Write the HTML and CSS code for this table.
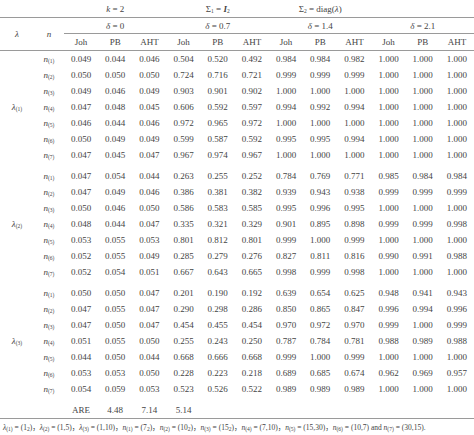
FILE: index.html
```html
<!DOCTYPE html>
<html>
<head>
<meta charset="utf-8">
<link rel="stylesheet" href="styles.css">
</head>
<body>
<table class="tbl">
<colgroup><col class="c-l"><col class="c-n"><col span="12" class="c-d"></colgroup>
<thead>
<tr class="r1">
<th></th><th></th>
<th colspan="3"><i>k</i> = 2</th>
<th colspan="3">Σ<sub class="s">1</sub> = <b><i>I</i></b><sub class="s">2</sub></th>
<th colspan="3">Σ<sub class="s">2</sub> = diag(<i>λ</i>)</th>
<th colspan="3"></th>
</tr>
<tr class="r2">
<th rowspan="2" class="lab"><i>λ</i></th><th rowspan="2" class="lab"><i>n</i></th>
<th colspan="3" class="dl"><i>δ</i> = 0</th>
<th colspan="3" class="dl"><i>δ</i> = 0.7</th>
<th colspan="3" class="dl"><i>δ</i> = 1.4</th>
<th colspan="3" class="dl"><i>δ</i> = 2.1</th>
</tr>
<tr class="r3">
<th>Joh</th><th>PB</th><th>AHT</th><th>Joh</th><th>PB</th><th>AHT</th><th>Joh</th><th>PB</th><th>AHT</th><th>Joh</th><th>PB</th><th>AHT</th>
</tr>
</thead>
<tbody>
<tr class="first"><td rowspan="7" class="lam"><i>λ</i><sub class="s">(1)</sub></td><td><i>n</i><sub class="s">(1)</sub></td><td>0.049</td><td>0.044</td><td>0.046</td><td>0.504</td><td>0.520</td><td>0.492</td><td>0.984</td><td>0.984</td><td>0.982</td><td>1.000</td><td>1.000</td><td>1.000</td></tr>
<tr><td><i>n</i><sub class="s">(2)</sub></td><td>0.050</td><td>0.050</td><td>0.050</td><td>0.724</td><td>0.716</td><td>0.721</td><td>0.999</td><td>0.999</td><td>0.999</td><td>1.000</td><td>1.000</td><td>1.000</td></tr>
<tr><td><i>n</i><sub class="s">(3)</sub></td><td>0.049</td><td>0.046</td><td>0.049</td><td>0.903</td><td>0.901</td><td>0.902</td><td>1.000</td><td>1.000</td><td>1.000</td><td>1.000</td><td>1.000</td><td>1.000</td></tr>
<tr><td><i>n</i><sub class="s">(4)</sub></td><td>0.047</td><td>0.048</td><td>0.045</td><td>0.606</td><td>0.592</td><td>0.597</td><td>0.994</td><td>0.992</td><td>0.994</td><td>1.000</td><td>1.000</td><td>1.000</td></tr>
<tr><td><i>n</i><sub class="s">(5)</sub></td><td>0.046</td><td>0.044</td><td>0.046</td><td>0.972</td><td>0.965</td><td>0.972</td><td>1.000</td><td>1.000</td><td>1.000</td><td>1.000</td><td>1.000</td><td>1.000</td></tr>
<tr><td><i>n</i><sub class="s">(6)</sub></td><td>0.050</td><td>0.049</td><td>0.049</td><td>0.599</td><td>0.587</td><td>0.592</td><td>0.995</td><td>0.995</td><td>0.994</td><td>1.000</td><td>1.000</td><td>1.000</td></tr>
<tr><td><i>n</i><sub class="s">(7)</sub></td><td>0.047</td><td>0.045</td><td>0.047</td><td>0.967</td><td>0.974</td><td>0.967</td><td>1.000</td><td>1.000</td><td>1.000</td><td>1.000</td><td>1.000</td><td>1.000</td></tr>

<tr class="gap"><td rowspan="7" class="lam"><i>λ</i><sub class="s">(2)</sub></td><td><i>n</i><sub class="s">(1)</sub></td><td>0.047</td><td>0.054</td><td>0.044</td><td>0.263</td><td>0.255</td><td>0.252</td><td>0.784</td><td>0.769</td><td>0.771</td><td>0.985</td><td>0.984</td><td>0.984</td></tr>
<tr><td><i>n</i><sub class="s">(2)</sub></td><td>0.047</td><td>0.049</td><td>0.046</td><td>0.386</td><td>0.381</td><td>0.382</td><td>0.939</td><td>0.943</td><td>0.938</td><td>0.999</td><td>0.999</td><td>0.999</td></tr>
<tr><td><i>n</i><sub class="s">(3)</sub></td><td>0.050</td><td>0.046</td><td>0.050</td><td>0.586</td><td>0.583</td><td>0.585</td><td>0.995</td><td>0.996</td><td>0.995</td><td>1.000</td><td>1.000</td><td>1.000</td></tr>
<tr><td><i>n</i><sub class="s">(4)</sub></td><td>0.048</td><td>0.044</td><td>0.047</td><td>0.335</td><td>0.321</td><td>0.329</td><td>0.901</td><td>0.895</td><td>0.898</td><td>0.999</td><td>0.999</td><td>0.998</td></tr>
<tr><td><i>n</i><sub class="s">(5)</sub></td><td>0.053</td><td>0.055</td><td>0.053</td><td>0.801</td><td>0.812</td><td>0.801</td><td>0.999</td><td>1.000</td><td>0.999</td><td>1.000</td><td>1.000</td><td>1.000</td></tr>
<tr><td><i>n</i><sub class="s">(6)</sub></td><td>0.052</td><td>0.055</td><td>0.049</td><td>0.285</td><td>0.279</td><td>0.276</td><td>0.827</td><td>0.811</td><td>0.816</td><td>0.990</td><td>0.991</td><td>0.988</td></tr>
<tr><td><i>n</i><sub class="s">(7)</sub></td><td>0.052</td><td>0.054</td><td>0.051</td><td>0.667</td><td>0.643</td><td>0.665</td><td>0.998</td><td>0.999</td><td>0.998</td><td>1.000</td><td>1.000</td><td>1.000</td></tr>

<tr class="gap"><td rowspan="7" class="lam"><i>λ</i><sub class="s">(3)</sub></td><td><i>n</i><sub class="s">(1)</sub></td><td>0.050</td><td>0.050</td><td>0.047</td><td>0.201</td><td>0.190</td><td>0.192</td><td>0.639</td><td>0.654</td><td>0.625</td><td>0.948</td><td>0.941</td><td>0.943</td></tr>
<tr><td><i>n</i><sub class="s">(2)</sub></td><td>0.047</td><td>0.055</td><td>0.047</td><td>0.290</td><td>0.298</td><td>0.286</td><td>0.850</td><td>0.865</td><td>0.847</td><td>0.996</td><td>0.994</td><td>0.996</td></tr>
<tr><td><i>n</i><sub class="s">(3)</sub></td><td>0.047</td><td>0.050</td><td>0.047</td><td>0.454</td><td>0.455</td><td>0.454</td><td>0.970</td><td>0.972</td><td>0.970</td><td>0.999</td><td>1.000</td><td>0.999</td></tr>
<tr><td><i>n</i><sub class="s">(4)</sub></td><td>0.051</td><td>0.055</td><td>0.050</td><td>0.255</td><td>0.243</td><td>0.250</td><td>0.787</td><td>0.784</td><td>0.781</td><td>0.988</td><td>0.989</td><td>0.988</td></tr>
<tr><td><i>n</i><sub class="s">(5)</sub></td><td>0.044</td><td>0.050</td><td>0.044</td><td>0.668</td><td>0.666</td><td>0.668</td><td>0.999</td><td>1.000</td><td>0.999</td><td>1.000</td><td>1.000</td><td>1.000</td></tr>
<tr><td><i>n</i><sub class="s">(6)</sub></td><td>0.053</td><td>0.053</td><td>0.050</td><td>0.228</td><td>0.223</td><td>0.218</td><td>0.689</td><td>0.685</td><td>0.674</td><td>0.962</td><td>0.969</td><td>0.957</td></tr>
<tr><td><i>n</i><sub class="s">(7)</sub></td><td>0.054</td><td>0.059</td><td>0.053</td><td>0.523</td><td>0.526</td><td>0.522</td><td>0.989</td><td>0.989</td><td>0.989</td><td>1.000</td><td>1.000</td><td>1.000</td></tr>

<tr class="gap are"><td></td><td></td><td>ARE</td><td>4.48</td><td>7.14</td><td>5.14</td><td></td><td></td><td></td><td></td><td></td><td></td><td></td><td></td></tr>
</tbody>
</table>
<p class="note"><i>λ</i><sub class="s">(1)</sub> = (1<sub class="s">2</sub>)，<i>λ</i><sub class="s">(2)</sub> = (1,5)，<i>λ</i><sub class="s">(3)</sub> = (1,10)，<i>n</i><sub class="s">(1)</sub> = (7<sub class="s">2</sub>)，<i>n</i><sub class="s">(2)</sub> = (10<sub class="s">2</sub>)，<i>n</i><sub class="s">(3)</sub> = (15<sub class="s">2</sub>)，<i>n</i><sub class="s">(4)</sub> = (7,10)，<i>n</i><sub class="s">(5)</sub> = (15,30)，<i>n</i><sub class="s">(6)</sub> = (10,7) and <i>n</i><sub class="s">(7)</sub> = (30,15).</p>
</body>
</html>
```
FILE: styles.css
```css
html, body {
  margin: 0;
  padding: 0;
  background: #fff;
}
body {
  color: #444;
  font-family: "Liberation Serif", "Times New Roman", "Noto Sans CJK SC", serif;
  font-size: 9px;
  width: 474px;
}
.tbl {
  border-collapse: separate;
  border-spacing: 0;
  table-layout: fixed;
  width: 474px;
}
.c-l { width: 34px; }
.c-n { width: 30px; }
.c-d { width: 34.17px; }
.tbl th, .tbl td {
  padding: 0;
  text-align: center;
  vertical-align: middle;
  font-weight: normal;
  line-height: 10px;
  white-space: nowrap;
  box-sizing: border-box;
}
.s {
  font-size: 5.5px;
  line-height: 0;
  vertical-align: -0.25em;
}
b { font-weight: bold; }
.r1 th {
  height: 18px;
  border-bottom: 1px solid #9a9a9a;
}
.r2 th {
  height: 16px;
}
.r2 th.dl {
  border-bottom: 1px solid #9a9a9a;
}
.r2 th.lab {
  border-bottom: 1px solid #9a9a9a;
}
.r3 th {
  height: 17px;
  border-bottom: 1px solid #9a9a9a;
}
.tbl tbody td {
  height: 16px;
}
.tbl tbody tr.gap td {
  height: 21px;
  padding-top: 5px;
}
.tbl tbody td.lam {
  padding-top: 0;
}
.tbl tbody tr.gap td.lam {
  padding-top: 5px;
}
.tbl tbody tr.are td {
  border-bottom: 1px solid #9a9a9a;
  height: 22px;
  padding-top: 4px;
}
.note {
  margin: 3px 0 0 3px;
  font-size: 7.5px;
  line-height: 12px;
  white-space: nowrap;
}
```
